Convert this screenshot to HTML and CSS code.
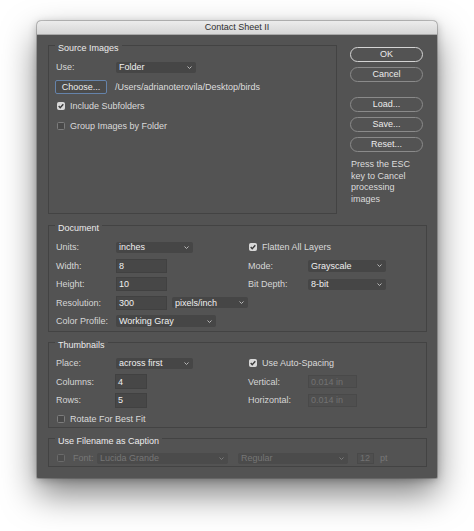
FILE: index.html
```html
<!DOCTYPE html>
<html>
<head>
<meta charset="utf-8">
<title>Contact Sheet II</title>
<link rel="stylesheet" href="styles.css">
</head>
<body>
<div class="window">
  <div class="titlebar">Contact Sheet II</div>
  <div class="content">
    <div class="top">
      <section class="group source">
        <div class="group-title">Source Images</div>
        <div class="stack source-stack">
          <div class="row"><span class="label">Use:</span><span class="select w80">Folder<svg class="chev" width="5" height="3" viewBox="0 0 5 3"><polyline points="0.5,0.5 2.5,2.5 4.5,0.5"/></svg></span></div>
          <div class="row"><span class="choose">Choose...</span><span class="path">/Users/adrianoterovila/Desktop/birds</span></div>
          <div class="row"><span class="check on"><svg width="8" height="8" viewBox="0 0 8 8"><polyline points="1.7,4.1 3.2,5.7 6.3,2.2"/></svg></span><span class="check-text">Include Subfolders</span></div>
          <div class="row"><span class="check"></span><span class="check-text">Group Images by Folder</span></div>
        </div>
      </section>
      <div class="buttons">
        <button class="btn default">OK</button>
        <button class="btn">Cancel</button>
        <button class="btn spaced">Load...</button>
        <button class="btn">Save...</button>
        <button class="btn">Reset...</button>
        <p class="hint">Press the ESC<br>key to Cancel<br>processing<br>images</p>
      </div>
    </div>

    <section class="group document">
      <div class="group-title">Document</div>
      <div class="cols">
        <div class="col col-left">
          <div class="row"><span class="label">Units:</span><span class="select w77">inches<svg class="chev" width="5" height="3" viewBox="0 0 5 3"><polyline points="0.5,0.5 2.5,2.5 4.5,0.5"/></svg></span></div>
          <div class="row"><span class="label">Width:</span><span class="input w51">8</span></div>
          <div class="row"><span class="label">Height:</span><span class="input w51">10</span></div>
          <div class="row"><span class="label">Resolution:</span><span class="input w51">300</span><span class="select w76 gap5">pixels/inch<svg class="chev" width="5" height="3" viewBox="0 0 5 3"><polyline points="0.5,0.5 2.5,2.5 4.5,0.5"/></svg></span></div>
          <div class="row"><span class="label">Color Profile:</span><span class="select w100 tall">Working Gray<svg class="chev" width="5" height="3" viewBox="0 0 5 3"><polyline points="0.5,0.5 2.5,2.5 4.5,0.5"/></svg></span></div>
        </div>
        <div class="col">
          <div class="row"><span class="check on"><svg width="8" height="8" viewBox="0 0 8 8"><polyline points="1.7,4.1 3.2,5.7 6.3,2.2"/></svg></span><span class="check-text">Flatten All Layers</span></div>
          <div class="row"><span class="label">Mode:</span><span class="select w78 tall">Grayscale<svg class="chev" width="5" height="3" viewBox="0 0 5 3"><polyline points="0.5,0.5 2.5,2.5 4.5,0.5"/></svg></span></div>
          <div class="row"><span class="label">Bit Depth:</span><span class="select w78">8-bit<svg class="chev" width="5" height="3" viewBox="0 0 5 3"><polyline points="0.5,0.5 2.5,2.5 4.5,0.5"/></svg></span></div>
        </div>
      </div>
    </section>

    <section class="group thumbs">
      <div class="group-title">Thumbnails</div>
      <div class="cols">
        <div class="col col-left">
          <div class="row"><span class="label">Place:</span><span class="select w77">across first<svg class="chev" width="5" height="3" viewBox="0 0 5 3"><polyline points="0.5,0.5 2.5,2.5 4.5,0.5"/></svg></span></div>
          <div class="row"><span class="label">Columns:</span><span class="input w32 tall15">4</span></div>
          <div class="row"><span class="label">Rows:</span><span class="input w32 tall15">5</span></div>
          <div class="row"><span class="check"></span><span class="check-text">Rotate For Best Fit</span></div>
        </div>
        <div class="col">
          <div class="row"><span class="check on"><svg width="8" height="8" viewBox="0 0 8 8"><polyline points="1.7,4.1 3.2,5.7 6.3,2.2"/></svg></span><span class="check-text">Use Auto-Spacing</span></div>
          <div class="row"><span class="label">Vertical:</span><span class="input w49 disabled">0.014 in</span></div>
          <div class="row"><span class="label">Horizontal:</span><span class="input w49 disabled">0.014 in</span></div>
        </div>
      </div>
    </section>

    <section class="group caption">
      <div class="group-title">Use Filename as Caption</div>
      <div class="row caption-row">
        <span class="check dim"></span>
        <span class="font-label">Font:</span>
        <span class="select w131 dim-select">Lucida Grande<svg class="chev" width="5" height="3" viewBox="0 0 5 3"><polyline points="0.5,0.5 2.5,2.5 4.5,0.5"/></svg></span>
        <span class="select w110 dim-select gap10">Regular<svg class="chev" width="5" height="3" viewBox="0 0 5 3"><polyline points="0.5,0.5 2.5,2.5 4.5,0.5"/></svg></span>
        <span class="input w17 disabled small gap9">12</span>
        <span class="unit">pt</span>
      </div>
    </section>
  </div>
</div>
</body>
</html>
```

FILE: styles.css
```css
* { box-sizing: border-box; }
html, body { margin: 0; padding: 0; background: #ffffff; }
body {
  min-height: 531px;
  padding-top: 21px;
  font-family: "Liberation Sans", Arial, sans-serif;
  font-size: 9px;
  color: #d9d9d9;
}

.window {
  margin: 0 0 0 37px;
  width: 400px;
  height: 457px;
  background: #535353;
  border-radius: 4px 4px 1px 1px;
  overflow: hidden;
  box-shadow: 0 16px 34px rgba(0, 0, 0, 0.5), 0 2px 8px rgba(0, 0, 0, 0.25), 0 0 0 1px rgba(0, 0, 0, 0.2);
  display: flex;
  flex-direction: column;
}

.titlebar {
  height: 14px;
  line-height: 13px;
  text-align: center;
  color: #2f2f2f;
  background: linear-gradient(#ececec, #d6d6d6);
  border-bottom: 1px solid #a8a8a8;
  flex: none;
}

.content {
  padding: 10px 10px 0 11px;
  display: flex;
  flex-direction: column;
}

.top { display: flex; gap: 13px; }

.group {
  border: 1px solid #434343;
  padding: 0 7px;
}
.group-title {
  margin: -3px 0 0 -1px;
  padding: 0 3px;
  width: max-content;
  line-height: 11px;
  background: #535353;
  color: #ececec;
}

.source { width: 289px; height: 169px; }
.document { height: 107px; margin-top: 11px; }
.thumbs { height: 86px; margin-top: 10px; }
.caption { height: 29px; margin-top: 10px; }

.stack { display: flex; flex-direction: column; gap: 5.7px; margin-top: 6px; }

.cols { display: flex; margin-top: 6px; }
.thumbs .cols { margin-top: 5px; }
.col { display: flex; flex-direction: column; gap: 4.6px; }
.col-left { width: 192px; flex: none; }

.row { height: 14px; display: flex; align-items: center; white-space: nowrap; }
.label { width: 60px; flex: none; color: #d6d6d6; }

.select {
  height: 11px;
  background: #464646;
  border-radius: 2px;
  color: #f0f0f0;
  padding: 0 4px 0 3px;
  display: flex;
  align-items: center;
  justify-content: space-between;
  flex: none;
}
.select.tall { height: 12px; }
.chev { fill: none; stroke: #b8b8b8; stroke-width: 1; }

.input {
  height: 14px;
  background: #474747;
  border: 1px solid #414141;
  color: #f0f0f0;
  padding: 0 2px;
  display: flex;
  align-items: center;
  flex: none;
}
.input.tall15 { height: 15px; margin-left: -1px; }
.input.disabled {
  height: 13px;
  background: #4f4f4f;
  border-color: #494949;
  color: #727272;
}
.input.small { height: 11px; }

.w17 { width: 17px; }
.w32 { width: 32px; }
.w49 { width: 49px; }
.w51 { width: 51px; }
.w76 { width: 76px; }
.w77 { width: 77px; }
.w78 { width: 78px; }
.w80 { width: 80px; }
.w100 { width: 100px; }
.w110 { width: 110px; }
.w131 { width: 131px; }
.gap5 { margin-left: 5px; }
.gap9 { margin-left: 9px; }
.gap10 { margin-left: 10px; }

.choose {
  width: 52px;
  height: 14px;
  margin-left: -1px;
  background: #4b4b4b;
  border: 1px solid #6583aa;
  border-radius: 2px;
  color: #ededed;
  display: flex;
  align-items: center;
  justify-content: center;
  flex: none;
}
.path { margin-left: 8px; color: #dedede; }

.check {
  width: 8px;
  height: 8px;
  margin-left: 1px;
  border: 1px solid #7c7c7c;
  border-radius: 1.5px;
  background: #494949;
  flex: none;
  display: flex;
}
.check.on { background: #d8d8d8; border-color: #d8d8d8; }
.check svg { margin: -1px; fill: none; stroke: #3a3a3a; stroke-width: 1.4; }
.check.dim { border-color: #6a6a6a; background: #4d4d4d; }
.check-text { margin-left: 5px; color: #dadada; }

.buttons {
  width: 73px;
  padding-top: 2px;
  display: flex;
  flex-direction: column;
  gap: 5px;
}
.btn {
  height: 15px;
  width: 73px;
  padding: 0;
  margin: 0;
  font: inherit;
  line-height: 13px;
  color: #ececec;
  background: transparent;
  border: 1px solid #8a8a8a;
  border-radius: 8px;
}
.btn.default { border-color: #d4d4d4; }
.btn.spaced { margin-top: 10px; }
.hint {
  margin: 2px 0 0 1px;
  line-height: 11.5px;
  color: #dcdcdc;
}

.caption-row { margin-top: 4px; }
.font-label { width: 24px; margin-left: 8px; color: #777777; flex: none; }
.dim-select { background: #4b4b4b; color: #767676; }
.dim-select .chev { stroke: #7a7a7a; }
.unit { margin-left: 6px; color: #777777; }
```
